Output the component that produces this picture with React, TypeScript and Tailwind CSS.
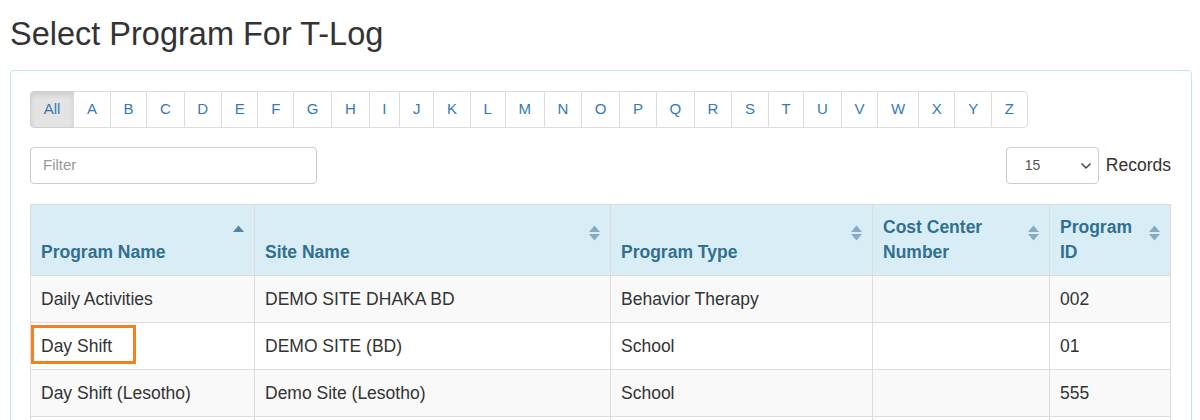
import React from 'react'

const letters = ['All', 'A', 'B', 'C', 'D', 'E', 'F', 'G', 'H', 'I', 'J', 'K', 'L', 'M', 'N', 'O', 'P', 'Q', 'R', 'S', 'T', 'U', 'V', 'W', 'X', 'Y', 'Z']

const rows = [
  { name: 'Daily Activities', site: 'DEMO SITE DHAKA BD', type: 'Behavior Therapy', cost: '', id: '002' },
  { name: 'Day Shift', site: 'DEMO SITE (BD)', type: 'School', cost: '', id: '01' },
  { name: 'Day Shift (Lesotho)', site: 'Demo Site (Lesotho)', type: 'School', cost: '', id: '555' },
  // next row only peeks in at the bottom edge
  { name: '', site: '', type: '', cost: '', id: '' },
]

function SortIcon({ active }: { active?: boolean }) {
  if (active) {
    return (
      <svg width="11" height="7" viewBox="0 0 11 7" className="absolute right-[10px] top-[20px]">
        <polygon points="0,7 5.5,0.5 11,7" fill="#4f86a8" />
      </svg>
    )
  }
  return (
    <svg width="11" height="16" viewBox="0 0 11 16" className="absolute right-[10px] top-[20px]">
      <polygon points="0,7 5.5,0.5 11,7" fill="#86abc3" />
      <polygon points="0,9 5.5,15.5 11,9" fill="#86abc3" />
    </svg>
  )
}

function HeaderCell({ label, active }: { label: string; active?: boolean }) {
  return (
    <th className="relative border border-[#dcdcdc] bg-[#d9edf7] py-[10px] pl-[10px] pr-[36px] text-left align-bottom text-[17.5px] font-bold leading-[25px] text-[#31708f]">
      {label}
      <SortIcon active={active} />
    </th>
  )
}

const cell = 'h-[47px] border border-[#ddd] px-[10px] py-[11px] text-[17.5px] leading-[24px]'

export default function App() {
  return (
    <div className="min-h-[420px] bg-white font-['Liberation_Sans',Arial,sans-serif] text-[#333]">
      {/* Page title */}
      <h1 className="pl-[10px] pt-[14px] text-[32.5px] font-normal leading-[40px] text-[#333]">
        Select Program For T-Log
      </h1>

      <div className="ml-[10px] mr-[8px] mt-[16px] rounded-[4px] border border-[#bce8f1] pl-[19px] pr-[20px] pt-[20px] pb-[20px]">
        {/* Alphabet pagination */}
        <div className="flex">
          {letters.map((l, i) => (
            <div
              key={l}
              className={`-ml-px flex h-[37px] items-center border px-[12.75px] text-[15px] text-[#337ab7] first:ml-0 ${
                i === 0
                  ? 'rounded-l-[4px] border-[#cfcfcf] bg-[#e4e4e4] shadow-[inset_0_3px_5px_rgba(0,0,0,0.1)]'
                  : 'border-[#ddd] bg-white'
              } ${i === letters.length - 1 ? 'rounded-r-[4px]' : ''}`}
            >
              {l}
            </div>
          ))}
        </div>

        {/* Filter + records */}
        <div className="mt-[19px] flex items-center justify-between">
          <div className="flex h-[37px] w-[287px] items-center rounded-[4px] border border-[#ccc] pl-[12px] text-[15px] text-[#999]">
            Filter
          </div>
          <div className="flex items-center gap-[7px]">
            <div className="flex h-[37px] w-[93px] items-center justify-between rounded-[4px] border border-[#ccc] pl-[18px] pr-[6px] text-[14px] text-[#555]">
              <span>15</span>
              <svg width="12" height="8" viewBox="0 0 12 8">
                <path d="M1.5 1.5l4.5 4.5 4.5-4.5" fill="none" stroke="#444" strokeWidth="1.5" />
              </svg>
            </div>
            <span className="text-[17.5px] text-[#333]">Records</span>
          </div>
        </div>

        {/* Table */}
        <table className="mt-[20px] w-full table-fixed border-collapse border border-[#ddd]">
          <colgroup>
            <col className="w-[224px]" />
            <col className="w-[356px]" />
            <col className="w-[262px]" />
            <col className="w-[177px]" />
            <col />
          </colgroup>
          <thead>
            <tr>
              <HeaderCell label="Program Name" active />
              <HeaderCell label="Site Name" />
              <HeaderCell label="Program Type" />
              <HeaderCell label="Cost Center Number" />
              <HeaderCell label="Program ID" />
            </tr>
          </thead>
          <tbody>
            {rows.map((r, i) => (
              <tr key={i} className={i % 2 === 0 ? 'bg-[#f9f9f9]' : 'bg-white'}>
                <td className={`relative ${cell}`}>
                  {r.name}
                  {i === 1 && (
                    <div className="pointer-events-none absolute left-0 top-[2px] h-[39px] w-[105px] border-[3px] border-[#f48120]" />
                  )}
                </td>
                <td className={cell}>{r.site}</td>
                <td className={cell}>{r.type}</td>
                <td className={cell}>{r.cost}</td>
                <td className={cell}>{r.id}</td>
              </tr>
            ))}
          </tbody>
        </table>
      </div>
    </div>
  )
}
